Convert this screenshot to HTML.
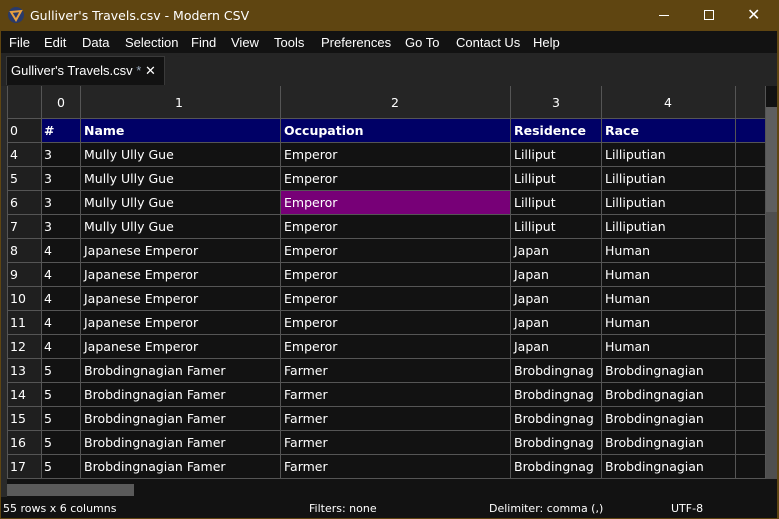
<!DOCTYPE html>
<html><head><style>
*{margin:0;padding:0;box-sizing:border-box}
body{width:779px;height:519px;background:#5f4511;font-family:"DejaVu Sans","Liberation Sans",sans-serif;font-size:12px;color:#fff;position:relative;overflow:hidden}
.abs{position:absolute}
#title{left:0;top:0;width:779px;height:31px;background:#5f4511}
#menu{left:1px;top:31px;width:776px;height:22px;background:#121212}
#menu span{position:absolute;top:4px;font-size:13px;font-family:"Liberation Sans",sans-serif}
#tabbar{left:1px;top:53px;width:776px;height:33px;background:#252525}
#tab{left:6px;top:56px;width:159px;height:29px;background:#121212;border:1px solid #3a3a3a;border-bottom:none}
#grid{left:1px;top:86px;width:776px;height:411px;background:#121212}
.vl{position:absolute;width:1px;background:#555}
.hl{position:absolute;height:1px;background:#555}
.t{position:absolute;white-space:nowrap;font-size:12.5px}
#status{left:1px;top:497px;width:776px;height:21px;background:#121212}
#status span{position:absolute;top:5px;font-size:11px}
</style></head><body>
<div id="title" class="abs">
<svg class="abs" style="left:8px;top:7px" width="16" height="16"><circle cx="8" cy="8" r="8" fill="#2a3a6a"/><path d="M3 5 L13 4 L8 13 Z" fill="none" stroke="#e8a040" stroke-width="2"/></svg>
<span class="abs" style="left:30px;top:8px;font-size:12.5px">Gulliver's Travels.csv - Modern CSV</span>
<div class="abs" style="left:659px;top:15px;width:10px;height:1px;background:#fff"></div>
<div class="abs" style="left:704px;top:10px;width:10px;height:10px;border:1px solid #fff"></div>
<span class="abs" style="left:747px;top:5px;font-size:16px">✕</span>
</div>
<div id="menu" class="abs">
<span style="left:8px">File</span><span style="left:43px">Edit</span><span style="left:81px">Data</span><span style="left:124px">Selection</span><span style="left:190px">Find</span><span style="left:230px">View</span><span style="left:273px">Tools</span><span style="left:320px">Preferences</span><span style="left:404px">Go To</span><span style="left:455px">Contact Us</span><span style="left:532px">Help</span>
</div>
<div id="tabbar" class="abs"></div>
<div id="tab" class="abs"><span class="abs" style="left:4px;top:6px;font-size:13px;white-space:nowrap;font-family:'Liberation Sans',sans-serif">Gulliver's Travels.csv <span style="color:#9ab">*</span> ✕</span></div>
<div id="grid" class="abs">
<div class="abs" style="left:6px;top:0;width:758px;height:32px;background:#252525"></div>
<div class="abs" style="left:6px;top:32px;width:34px;height:361px;background:#1f1f1f"></div>
<div class="abs" style="left:40px;top:33px;width:724px;height:23px;background:#000066"></div>
<div class="abs" style="left:280px;top:105px;width:229px;height:23px;background:#770077"></div>
<div class="abs" style="left:764px;top:0;width:12px;height:393px;background:#4f4f4f"></div>
<div class="abs" style="left:764px;top:0;width:12px;height:21px;background:#121212"></div>
<div class="abs" style="left:764px;top:21px;width:12px;height:105px;background:#5f5f5f"></div>
<div class="abs" style="left:6px;top:393px;width:758px;height:18px;background:#121212"></div>
<div class="abs" style="left:6px;top:398px;width:127px;height:12px;background:#5a5a5a"></div>
<div class="abs" style="left:0;top:0;width:6px;height:411px;background:#2a2a2a"></div>
<div id="lines"></div>
<div id="txt"></div>
</div>
<div id="status" class="abs">
<span style="left:2px">55 rows x 6 columns</span><span style="left:308px">Filters: none</span><span style="left:488px">Delimiter: comma (,)</span><span style="left:670px">UTF-8</span>
</div>
<script>
var cols=[6,40,79,279,509,600,734,764];
var L='';
cols.forEach(function(x){L+='<div class="vl" style="left:'+x+'px;top:0;height:393px"></div>'});
L+='<div class="hl" style="left:6px;width:758px;top:32px"></div>';
for(var i=0;i<15;i++)L+='<div class="hl" style="left:6px;width:758px;top:'+(56+24*i)+'px"></div>';
document.getElementById('lines').innerHTML=L;
var T='';
var hx=[[60,'0'],[178,'1'],[394,'2'],[555,'3'],[667,'4']];
hx.forEach(function(h){T+='<div class="t" style="left:'+(h[0]-4)+'px;top:9px">'+h[1]+'</div>'});
var rows=[['0','#','Name','Occupation','Residence','Race',1]];
var d=[[4,3,'Mully Ully Gue','Emperor','Lilliput','Lilliputian'],[5,3,'Mully Ully Gue','Emperor','Lilliput','Lilliputian'],[6,3,'Mully Ully Gue','Emperor','Lilliput','Lilliputian'],[7,3,'Mully Ully Gue','Emperor','Lilliput','Lilliputian']];
for(var r=8;r<=12;r++)d.push([r,4,'Japanese Emperor','Emperor','Japan','Human']);
for(var r=13;r<=17;r++)d.push([r,5,'Brobdingnagian Famer','Farmer','Brobdingnag','Brobdingnagian']);
rows=rows.concat(d);
var xs=[9,43,83,283,513,604];
rows.forEach(function(r,i){var y=37+24*i;for(var c=0;c<6;c++){T+='<div class="t" style="left:'+xs[c]+'px;top:'+y+'px;'+(i==0&&c>0?'font-weight:bold':'')+'">'+r[c]+'</div>'}});
document.getElementById('txt').innerHTML=T;
</script>
</body></html>
